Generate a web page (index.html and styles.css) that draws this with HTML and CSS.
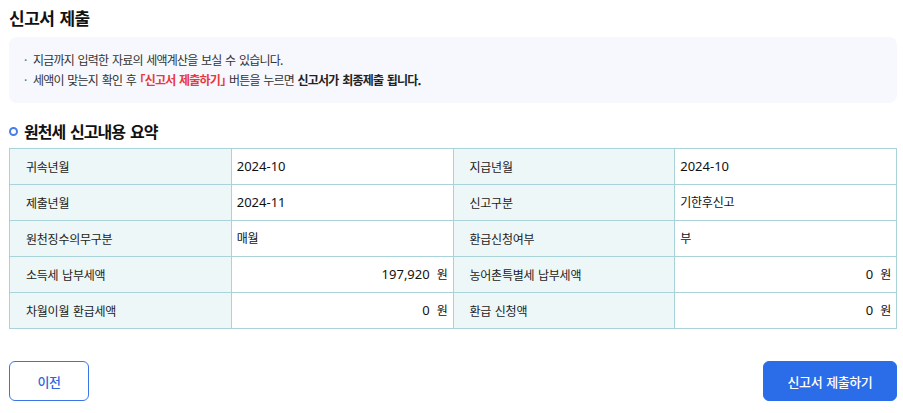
FILE: index.html
```html
<!DOCTYPE html>
<html lang="ko">
<head>
<meta charset="utf-8">
<title>신고서 제출</title>
<link rel="stylesheet" href="styles.css">
</head>
<body>
<div class="page">
  <h1 class="title">신고서 제출</h1>
  <div class="notice">
    <ul class="notice-list">
      <li>지금까지 입력한 자료의 세액계산을 보실 수 있습니다.</li>
      <li>세액이 맞는지 확인 후 <strong class="red"><span class="br">「</span>신고서 제출하기<span class="br">」</span></strong> 버튼을 누르면 <strong>신고서가 최종제출 됩니다.</strong></li>
    </ul>
  </div>
  <h2 class="section-title"><span class="ring"></span>원천세 신고내용 요약</h2>
  <table class="summary">
    <tbody>
      <tr>
        <th>귀속년월</th><td>2024-10</td>
        <th>지급년월</th><td>2024-10</td>
      </tr>
      <tr>
        <th>제출년월</th><td>2024-11</td>
        <th>신고구분</th><td><span class="ko">기한후신고</span></td>
      </tr>
      <tr>
        <th>원천징수의무구분</th><td><span class="ko">매월</span></td>
        <th>환급신청여부</th><td><span class="ko">부</span></td>
      </tr>
      <tr>
        <th>소득세 납부세액</th><td class="num">197,920<span class="ko unit">원</span></td>
        <th>농어촌특별세 납부세액</th><td class="num">0<span class="ko unit">원</span></td>
      </tr>
      <tr>
        <th>차월이월 환급세액</th><td class="num">0<span class="ko unit">원</span></td>
        <th>환급 신청액</th><td class="num">0<span class="ko unit">원</span></td>
      </tr>
    </tbody>
  </table>
  <div class="actions">
    <button class="btn btn-outline">이전</button>
    <button class="btn btn-primary">신고서 제출하기</button>
  </div>
</div>
</body>
</html>
```
FILE: styles.css
```css
* { box-sizing: border-box; }
html, body { margin: 0; padding: 0; background: #fff; }
body {
  font-family: "Noto Sans", "Noto Sans CJK KR", sans-serif;
  color: #222;
}
.page {
  padding: 6px 6px 0 9px;
  display: flex;
  flex-direction: column;
}
.title {
  margin: 0;
  font-size: 17px;
  line-height: 24px;
  font-weight: 700;
  color: #111;
  letter-spacing: -0.03em;
  word-spacing: 0.05em;
  font-family: "Noto Sans CJK KR", sans-serif;
}
.notice {
  margin-top: 7px;
  background: #f6f8fd;
  border-radius: 8px;
  padding: 13px 14px;
}
.notice-list {
  list-style: none;
  margin: 0;
  padding: 0;
  font-family: "Noto Sans CJK KR", sans-serif;
  font-size: 12px;
  line-height: 20px;
  color: #333;
  letter-spacing: -0.065em;
  word-spacing: 0.08em;
}
.notice-list li {
  position: relative;
  padding-left: 10px;
}
.notice-list li::before {
  content: "·";
  position: absolute;
  left: 1px;
  top: 0;
  color: #666;
}
.notice-list strong { font-weight: 700; color: #222; }
.notice-list strong.red { color: #e8383d; }
.br { font-feature-settings: "halt"; }
.section-title {
  margin: 17px 0 0;
  display: flex;
  align-items: center;
  gap: 6px;
  font-size: 16px;
  line-height: 22px;
  font-weight: 700;
  color: #111;
  letter-spacing: -0.06em;
  word-spacing: 0.08em;
  font-family: "Noto Sans CJK KR", sans-serif;
}
.ring {
  width: 9px;
  height: 9px;
  border: 2px solid #4a7ee6;
  border-radius: 50%;
  flex: none;
  margin-top: 1px;
}
.summary {
  margin-top: 6px;
  width: 100%;
  border-collapse: collapse;
  table-layout: fixed;
  border: 1px solid #a9d3d9;
}
.summary th, .summary td {
  border: 1px solid #a9d3d9;
  height: 36px;
  font-size: 13px;
  vertical-align: middle;
}
.summary th {
  background: #eef7f7;
  text-align: left;
  font-weight: 400;
  color: #222;
  padding: 0 0 1px 16px;
  font-family: "Noto Sans CJK KR", sans-serif;
  font-size: 12px;
  letter-spacing: -0.02em;
  word-spacing: 0.05em;
}
.summary td {
  color: #111;
  padding: 0 5px 1px 5px;
}
.summary td.num { text-align: right; }
.ko {
  font-family: "Noto Sans CJK KR", sans-serif;
  font-size: 12px;
  letter-spacing: -0.02em;
}
.unit { margin-left: 7px; }
.actions {
  margin-top: 32px;
  display: flex;
  justify-content: space-between;
}
.btn {
  height: 40px;
  border-radius: 6px;
  font-family: "Noto Sans CJK KR", sans-serif;
  font-size: 13px;
  font-weight: 500;
  letter-spacing: -0.03em;
  word-spacing: 0.05em;
  cursor: pointer;
}
.btn-outline {
  width: 80px;
  background: #fff;
  border: 1px solid #3a74e6;
  color: #2f67db;
}
.btn-primary {
  width: 134px;
  background: #2b6ce8;
  border: 1px solid #2b6ce8;
  color: #fff;
}
```
